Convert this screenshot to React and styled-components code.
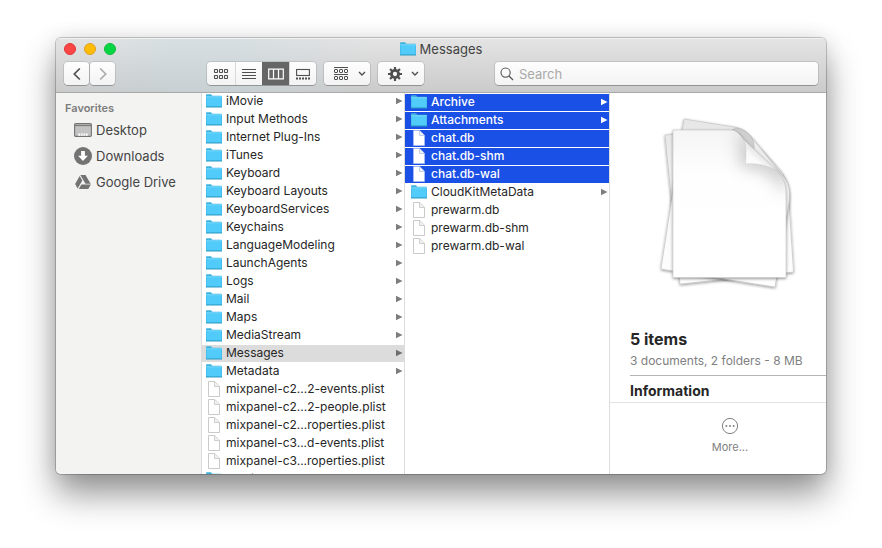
import React, { useState } from "react";
import styled, { createGlobalStyle } from "styled-components";

const COLORS = {
  text: "#262626",
  muted: "#808080",
  icon: "#4f4f4f",
  line: "#dcdcdc",
  selection: "#1a50e5",
  sidebar: "#f3f3f2",
};

const FAVORITES = [
  { name: "Desktop", icon: DesktopIcon },
  { name: "Downloads", icon: DownloadsIcon },
  { name: "Google Drive", icon: DriveIcon },
];

const folder = (name) => ({ name, isFolder: true });
const file = (name) => ({ name, isFolder: false });

const LIBRARY = [
  folder("iMovie"),
  folder("Input Methods"),
  folder("Internet Plug-Ins"),
  folder("iTunes"),
  folder("Keyboard"),
  folder("Keyboard Layouts"),
  folder("KeyboardServices"),
  folder("Keychains"),
  folder("LanguageModeling"),
  folder("LaunchAgents"),
  folder("Logs"),
  folder("Mail"),
  folder("Maps"),
  folder("MediaStream"),
  folder("Messages"),
  folder("Metadata"),
  file("mixpanel-c2...2-events.plist"),
  file("mixpanel-c2...2-people.plist"),
  file("mixpanel-c2...roperties.plist"),
  file("mixpanel-c3...d-events.plist"),
  file("mixpanel-c3...roperties.plist"),
  folder("mobile"),
];

const MESSAGES = [
  folder("Archive"),
  folder("Attachments"),
  file("chat.db"),
  file("chat.db-shm"),
  file("chat.db-wal"),
  folder("CloudKitMetaData"),
  file("prewarm.db"),
  file("prewarm.db-shm"),
  file("prewarm.db-wal"),
];

const SELECTED = ["Archive", "Attachments", "chat.db", "chat.db-shm", "chat.db-wal"];

const VIEWS = [
  { name: "Icons", icon: GridIcon },
  { name: "List", icon: ListIcon },
  { name: "Columns", icon: ColumnsIcon },
  { name: "Gallery", icon: GalleryIcon },
];

/* Icons */

function FolderIcon() {
  return (
    <svg width="16" height="14" viewBox="0 0 16 14" aria-hidden="true">
      <path d="M0 1.2Q0 .3.9.3H5l1.3 1.4h8.8q.9 0 .9.9V13H0z" fill="#3fb3de" />
      <path d="M.5 3h15v9.6H.5z" fill="#51cbfa" />
      <path d="M0 2.8h16" stroke="#7bdcff" strokeWidth="1" />
      <path d="M0 13h16" stroke="#2d9cc8" strokeWidth="1" />
    </svg>
  );
}

function FileIcon() {
  return (
    <svg width="16" height="16" viewBox="0 0 16 16" aria-hidden="true">
      <path
        d="M2.5.5h6.2l4.8 4.8v10.2h-11z"
        fill="#fff"
        stroke="currentColor"
        strokeWidth=".8"
      />
      <path d="M8.5.8v4.7h4.8" fill="#f1f1f1" stroke="currentColor" strokeWidth=".7" />
    </svg>
  );
}

function DesktopIcon() {
  return (
    <svg width="18" height="18" viewBox="0 0 18 18" aria-hidden="true">
      <rect x=".6" y="2.6" width="16.8" height="12.8" rx="1.2" fill="#c2c2c2" stroke="#737373" strokeWidth="1.1" />
      <path d="M1 4.6h16" stroke="#737373" strokeWidth="1" />
      <path d="M4.3 12.5h9.4v2.2H4.3z" fill="#fff" />
      <path d="M6.6 12.5v2.2M9 12.5v2.2M11.4 12.5v2.2" stroke="#aaa" strokeWidth=".7" />
    </svg>
  );
}

function DownloadsIcon() {
  return (
    <svg width="18" height="18" viewBox="0 0 18 18" aria-hidden="true">
      <circle cx="9" cy="9" r="9" fill="#737373" />
      <path d="M7.1 4h3.8v4.8h3L9 14 4.1 8.8h3z" fill="#fff" />
    </svg>
  );
}

function DriveIcon() {
  return (
    <svg width="18" height="18" viewBox="0 0 18 18" aria-hidden="true">
      <g fill="#737373">
        <path d="M6.3 2h5.2l5.2 8.7h-5.2z" />
        <path d="M5.6 2.9l2.7 4.5-4.6 8.2L1.1 11z" />
        <path d="M7.4 11.5h9.5L14.3 16H4.8z" />
      </g>
    </svg>
  );
}

function GridIcon() {
  return (
    <svg width="16" height="12" viewBox="0 0 16 12" aria-hidden="true">
      <g fill="none" stroke="currentColor" strokeWidth="1.1">
        {[1.5, 7.5].map((y) =>
          [1.5, 6.5, 11.5].map((x) => (
            <rect key={`${x}-${y}`} x={x} y={y} width="3" height="3" rx=".5" />
          ))
        )}
      </g>
    </svg>
  );
}

function ListIcon() {
  return (
    <svg width="14" height="12" viewBox="0 0 14 12" aria-hidden="true">
      <path d="M0 1.5h14M0 4.5h14M0 7.5h14M0 10.5h14" stroke="currentColor" />
    </svg>
  );
}

function ColumnsIcon() {
  return (
    <svg width="16" height="12" viewBox="0 0 16 12" aria-hidden="true">
      <path
        d="M.7 1.2h14.6v9.6H.7zM5.5 1v10M10.5 1v10"
        fill="none"
        stroke="currentColor"
        strokeWidth="1.2"
      />
    </svg>
  );
}

function GalleryIcon() {
  return (
    <svg width="14" height="12" viewBox="0 0 14 12" aria-hidden="true">
      <rect x=".6" y="1.5" width="12.8" height="6" fill="none" stroke="currentColor" strokeWidth="1.1" />
      <path d="M0 10.5h14" stroke="currentColor" strokeWidth="2" strokeDasharray="2 1" />
    </svg>
  );
}

function ArrangeIcon() {
  return (
    <svg width="16" height="14" viewBox="0 0 16 14" aria-hidden="true">
      <g fill="none" stroke="currentColor">
        <path d="M1 .5h14M1 7.5h14" />
        {[2.5, 9.5].map((y) =>
          [1.5, 6.5, 11.5].map((x) => (
            <rect key={`${x}-${y}`} x={x} y={y} width="3" height="3" rx=".5" />
          ))
        )}
      </g>
    </svg>
  );
}

function GearIcon() {
  return (
    <svg width="14" height="14" viewBox="0 0 14 14" aria-hidden="true">
      <g stroke="currentColor" fill="none">
        <circle cx="7" cy="7" r="3.6" strokeWidth="2.9" />
        <path
          d="M7 0v3M7 11v3M0 7h3M11 7h3M2.05 2.05l2 2M9.95 9.95l2 2M2.05 11.95l2-2M9.95 4.05l2-2"
          strokeWidth="2.2"
        />
      </g>
    </svg>
  );
}

function ChevronDown() {
  return (
    <svg width="8" height="6" viewBox="0 0 8 6" aria-hidden="true">
      <path d="M1 1l3 3 3-3" fill="none" stroke="currentColor" strokeWidth="1.4" />
    </svg>
  );
}

function ArrowIcon({ flip }) {
  return (
    <svg width="8" height="14" viewBox="0 0 8 14" aria-hidden="true">
      <path
        d={flip ? "M1.2 1.5L6.7 7l-5.5 5.500" : "M6.8 1.5L1.3 7l5.5 5.500"}
        fill="none"
        stroke="currentColor"
        strokeWidth="1.7"
      />
    </svg>
  );
}

function SearchIcon() {
  return (
    <svg width="14" height="14" viewBox="0 0 14 14" aria-hidden="true">
      <circle cx="5.6" cy="5.6" r="4.6" fill="none" stroke="#555" strokeWidth="1.1" />
      <path d="M9 9l4 4" stroke="#555" strokeWidth="1.3" />
    </svg>
  );
}

function Disclosure() {
  return (
    <svg width="7" height="8" viewBox="0 0 7 8" aria-hidden="true">
      <path d="M0 .8l6.5 3.2L0 7.2z" fill="currentColor" />
    </svg>
  );
}

function MoreIcon() {
  return (
    <svg width="18" height="18" viewBox="0 0 18 18" aria-hidden="true">
      <circle cx="9" cy="9" r="7.6" fill="none" stroke="currentColor" />
      <g fill="currentColor">
        <circle cx="5.4" cy="9" r="1" />
        <circle cx="9" cy="9" r="1" />
        <circle cx="12.6" cy="9" r="1" />
      </g>
    </svg>
  );
}

function PaperStack() {
  return (
    <svg width="160" height="186" viewBox="0 0 160 186" role="img" aria-label="Stack of documents">
      <defs>
        <filter id="paper-shadow" x="-10%" y="-10%" width="120%" height="120%">
          <feDropShadow dx="0" dy="1" stdDeviation="1.5" floodColor="#000" floodOpacity=".45" />
        </filter>
        <filter id="curl-shadow" x="-50%" y="-50%" width="200%" height="200%">
          <feGaussianBlur stdDeviation="8" />
        </filter>
        <linearGradient id="front-sheet" x1="0" y1="0" x2="0" y2="1">
          <stop offset="0" stopColor="#f5f5f5" />
          <stop offset=".3" stopColor="#fefefe" />
          <stop offset="1" stopColor="#fff" />
        </linearGradient>
        <linearGradient id="back-sheet" x1="0" y1="0" x2="0" y2="1">
          <stop offset="0" stopColor="#e6e6e6" />
          <stop offset=".4" stopColor="#f6f6f6" />
          <stop offset="1" stopColor="#fff" />
        </linearGradient>
        <linearGradient id="curl" x1="0" y1="1" x2=".55" y2=".4">
          <stop offset="0" stopColor="#fff" />
          <stop offset=".6" stopColor="#fafafa" />
          <stop offset="1" stopColor="#dedede" />
        </linearGradient>
        <clipPath id="front-clip">
          <path d="M23 18H80C87 18 90 23 94 28L126 58C133 65 136 71 136 82V165.5H23z" />
        </clipPath>
      </defs>
      <g filter="url(#paper-shadow)" stroke="#b5b5b5" strokeWidth=".5">
        <path d="M15 23L80 16C95 16 99 25 112 38L130 58C138 68 139 80 139 90L143.5 160L30 172z" fill="url(#back-sheet)" />
      </g>
      <g filter="url(#paper-shadow)" stroke="#b5b5b5" strokeWidth=".5">
        <path d="M34 7L84 15C94 16 101 24 107 32L131 62C139 70 140.5 78 139 90L125 175L11 157z" fill="url(#back-sheet)" />
      </g>
      <path d="M86 16C99 18 105 27 104 37L94 28C91 23 88 18 82 18z" fill="#cfcfcf" stroke="#aaa" strokeWidth=".5" />
      <g filter="url(#paper-shadow)">
        <path
          d="M23 18H80C87 18 90 23 94 28L126 58C133 65 136 71 136 82V165.5H23z"
          fill="url(#front-sheet)"
          stroke="#bbb"
          strokeWidth=".5"
        />
      </g>
      <g clipPath="url(#front-clip)">
        <path d="M84 16C94 28 86 44 92 56C108 56 126 60 134 84L142 50z" fill="#999" opacity=".48" filter="url(#curl-shadow)" />
      </g>
      <path d="M93.500 27.500C97 35 96 44 95.500 52C106 51 116 53 126 58z" fill="url(#curl)" stroke="#c8c8c8" strokeWidth=".4" />
    </svg>
  );
}

/* Parts */

const Column = ({ label, items, selected, active, inset }) => (
  <ColumnList aria-label={label} $inset={inset}>
    {items.map((item, i) => {
      const isSelected = selected.includes(item.name);
      const state = isSelected ? (active ? "active" : "path") : "none";
      return (
        <li key={i}>
          <Row type="button" aria-pressed={isSelected} $state={state} $inset={inset}>
            <RowIcon $state={state}>{item.isFolder ? <FolderIcon /> : <FileIcon />}</RowIcon>
            <RowName $state={state}>{item.name}</RowName>
            {item.isFolder && <Disclosure />}
          </Row>
        </li>
      );
    })}
  </ColumnList>
);

const App = () => {
  const [view, setView] = useState("Columns");
  const [query, setQuery] = useState("");

  return (
    <>
      <GlobalStyle />
      <Page>
        <Window>
          <Header>
            <TitleBar>
              <Lights>
                <Light type="button" aria-label="Close" $fill="#fc4645" $edge="#e23336" />
                <Light type="button" aria-label="Minimize" $fill="#fdbc05" $edge="#dfa023" />
                <Light type="button" aria-label="Zoom" $fill="#06d643" $edge="#10b83a" />
              </Lights>
              <Title>
                <FolderIcon />
                Messages
              </Title>
            </TitleBar>
            <Toolbar>
              <NavGroup>
                <ToolButton type="button" aria-label="Back">
                  <ArrowIcon />
                </ToolButton>
                <ToolButton type="button" aria-label="Forward" disabled>
                  <ArrowIcon flip />
                </ToolButton>
              </NavGroup>
              <ViewGroup role="group" aria-label="View">
                {VIEWS.map(({ name, icon: Icon }) => (
                  <ViewButton
                    key={name}
                    type="button"
                    aria-label={name}
                    aria-pressed={view === name}
                    onClick={() => setView(name)}
                  >
                    <Icon />
                  </ViewButton>
                ))}
              </ViewGroup>
              <MenuButton type="button" aria-label="Arrange" aria-haspopup="menu">
                <ArrangeIcon />
                <ChevronDown />
              </MenuButton>
              <MenuButton type="button" aria-label="Actions" aria-haspopup="menu">
                <GearIcon />
                <ChevronDown />
              </MenuButton>
              <SearchBox>
                <SearchIcon />
                <SearchInput
                  type="search"
                  aria-label="Search"
                  placeholder="Search"
                  value={query}
                  onChange={(e) => setQuery(e.target.value)}
                />
              </SearchBox>
            </Toolbar>
          </Header>
          <Content>
            <Sidebar aria-label="Favorites">
              <SidebarHeading>Favorites</SidebarHeading>
              {FAVORITES.map(({ name, icon: Icon }) => (
                <SidebarLink key={name} href={`#${name}`}>
                  <Icon />
                  {name}
                </SidebarLink>
              ))}
            </Sidebar>
            <Column label="Library" items={LIBRARY} selected={["Messages"]} />
            <Column label="Messages" items={MESSAGES} selected={SELECTED} active inset />
            <Preview>
              <Summary>
                <PaperStack />
                <Details>
                  <ItemCount>5 items</ItemCount>
                  <ItemInfo>3 documents, 2 folders - 8 MB</ItemInfo>
                  <InfoHeading>Information</InfoHeading>
                </Details>
              </Summary>
              <Actions>
                <MoreButton type="button">
                  <MoreIcon />
                  More...
                </MoreButton>
              </Actions>
            </Preview>
          </Content>
        </Window>
      </Page>
    </>
  );
};

const GlobalStyle = createGlobalStyle`
  *, *::before, *::after {
    box-sizing: border-box;
  }
  body {
    margin: 0;
    background: #fff;
    color: ${COLORS.text};
    font-family: Inter, "Liberation Sans", sans-serif;
    font-size: 12px;
  }
  button, input {
    font: inherit;
    color: inherit;
  }
  button {
    border: 0;
    padding: 0;
    background: none;
  }
  svg {
    display: block;
    flex: none;
  }
`;

const Page = styled.main`
  display: flex;
  height: 100vh;
  padding: 38px 56px 74px;
`;

const Window = styled.section`
  flex: 1;
  min-width: 0;
  display: flex;
  flex-direction: column;
  overflow: hidden;
  border-radius: 5px;
  background: #fff;
  box-shadow: 0 0 0 1px rgba(0, 0, 0, 0.2), 0 20px 34px rgba(0, 0, 0, 0.42),
    0 0 20px rgba(0, 0, 0, 0.1);
`;

// Header
const Header = styled.header`
  flex: none;
  height: 55px;
  border-bottom: 1px solid #a9a9a9;
  background: linear-gradient(
      to right,
      transparent,
      rgba(196, 216, 224, 0.4) 120px,
      rgba(196, 216, 224, 0.4) 170px,
      transparent 320px
    ),
    linear-gradient(#e4e4e4, #cbcbcb);
  box-shadow: inset 0 1px 0 #f2f2f2;
`;

const TitleBar = styled.div`
  display: grid;
  grid-template-columns: 1fr auto 1fr;
  align-items: center;
  height: 22px;
  padding: 0 8px;
`;

const Lights = styled.div`
  display: flex;
  gap: 8px;
`;

const Light = styled.button`
  width: 12px;
  height: 12px;
  border-radius: 50%;
  border: 1px solid ${(p) => p.$edge};
  background: ${(p) => p.$fill};
`;

const Title = styled.h1`
  display: flex;
  align-items: center;
  gap: 4px;
  margin: 0;
  font-size: 13px;
  font-weight: 400;
  color: #444;
`;

const Toolbar = styled.div`
  display: flex;
  align-items: center;
  gap: 8px;
  padding: 2px 8px 0;
`;

const raised = `
  display: flex;
  align-items: center;
  justify-content: center;
  height: 23px;
  border-radius: 4px;
  background: linear-gradient(#fefefe, #f3f3f3);
  box-shadow: 0 0 0 1px rgba(0, 0, 0, 0.1), 0 1px 0 rgba(0, 0, 0, 0.2);
  color: ${COLORS.icon};
`;

const NavGroup = styled.div`
  display: flex;
  gap: 1px;
  margin-right: 84px;
`;

const ToolButton = styled.button`
  ${raised}
  width: 25px;

  &:disabled {
    color: #ababab;
  }
`;

const ViewGroup = styled.div`
  ${raised}
  justify-content: flex-start;
  overflow: hidden;
`;

const ViewButton = styled.button`
  display: flex;
  align-items: center;
  justify-content: center;
  width: 28px;
  height: 100%;

  & + & {
    width: 27px;
    border-left: 1px solid #d8d8d8;
  }
  &[aria-pressed="true"] {
    border-color: #666;
    background: #666;
    color: #fff;
  }
`;

const MenuButton = styled.button`
  ${raised}
  gap: 9px;
  width: 46px;
  padding-left: 4px;
`;

const SearchBox = styled.label`
  ${raised}
  flex: 1;
  min-width: 0;
  gap: 5px;
  margin-left: 63px;
  padding: 0 5px;
`;

const SearchInput = styled.input`
  flex: 1;
  min-width: 0;
  border: 0;
  padding: 0;
  outline: none;
  background: none;
  font-size: 13px;

  &::placeholder {
    color: #a9a9a9;
  }
`;

// Content
const Content = styled.div`
  flex: 1;
  min-height: 0;
  display: flex;
`;

const Sidebar = styled.nav`
  flex: none;
  width: 146px;
  padding: 6px 9px;
  border-right: 1px solid ${COLORS.line};
  background: ${COLORS.sidebar};
`;

const SidebarHeading = styled.h2`
  margin: 0;
  font-size: 11px;
  font-weight: 600;
  line-height: 18px;
  color: #7c7c7c;
`;

const SidebarLink = styled.a`
  display: flex;
  align-items: center;
  gap: 4px;
  height: 26px;
  padding-left: 9px;
  font-size: 13px;
  color: #444;
  text-decoration: none;
`;

const ColumnList = styled.ul`
  flex: none;
  width: ${(p) => (p.$inset ? 205 : 203)}px;
  margin: 0;
  padding: ${(p) => (p.$inset ? 1 : 0)}px 0 0;
  border-right: 1px solid ${COLORS.line};
  overflow: hidden;
  list-style: none;
`;

const ROW_COLORS = {
  none: { background: "transparent", text: COLORS.text, arrow: "#7d7d7d", edge: "#bdbdbd" },
  path: { background: "#dcdcdc", text: COLORS.text, arrow: "#6e6e6e", edge: "#bdbdbd" },
  active: { background: COLORS.selection, text: "#fff", arrow: "#fff", edge: "#a9bdf3" },
};

const Row = styled.button`
  display: flex;
  align-items: center;
  gap: 4px;
  width: 100%;
  height: 17px;
  margin-bottom: 1px;
  padding: 0 1px 2px ${(p) => (p.$inset ? 6 : 4)}px;
  background: ${(p) => ROW_COLORS[p.$state].background};
  color: ${(p) => ROW_COLORS[p.$state].arrow};
  font-weight: ${(p) => (p.$state === "active" ? 500 : 400)};
  text-align: left;
`;

const RowIcon = styled.span`
  color: ${(p) => ROW_COLORS[p.$state].edge};
`;

const RowName = styled.span`
  flex: 1;
  min-width: 0;
  white-space: nowrap;
  color: ${(p) => ROW_COLORS[p.$state].text};
`;

// Preview keeps its own minimum width and is cut off by the window edge
const Preview = styled.aside`
  flex: 1;
  min-width: 0;
  display: flex;
  flex-direction: column;
  overflow: hidden;
`;

const Summary = styled.div`
  flex: 1;
  min-width: 240px;
  min-height: 0;
  display: flex;
  flex-direction: column;
  align-items: center;
  overflow: hidden;
  padding-top: 19px;
`;

const Details = styled.div`
  align-self: stretch;
  padding-top: 30px;
  padding-left: 20px;
`;

const ItemCount = styled.h2`
  margin: 0;
  font-size: 16px;
  font-weight: 700;
  line-height: 22px;
`;

const ItemInfo = styled.p`
  margin: 0;
  padding: 1px 0 4px;
  border-bottom: 1px solid #b5b5b5;
  line-height: 20px;
  color: ${COLORS.muted};
`;

const InfoHeading = styled.h3`
  margin: 0;
  padding-top: 6px;
  font-size: 14px;
  font-weight: 700;
  line-height: 18px;
`;

const Actions = styled.footer`
  flex: none;
  display: flex;
  justify-content: center;
  min-width: 240px;
  height: 72px;
  border-top: 1px solid #e2e2e2;
`;

const MoreButton = styled.button`
  display: flex;
  flex-direction: column;
  align-items: center;
  align-self: flex-start;
  gap: 4px;
  padding-top: 14px;
  font-size: 11px;
  line-height: 16px;
  color: ${COLORS.muted};
`;

export default App;
